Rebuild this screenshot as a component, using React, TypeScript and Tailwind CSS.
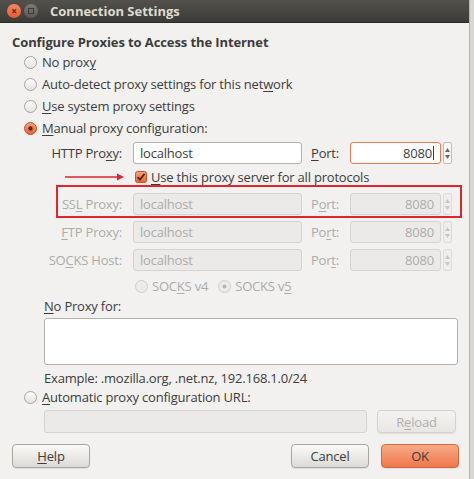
import React from "react";

const font = { fontFamily: '"Open Sans", "DejaVu Sans", sans-serif' };

function Radio({ checked = false, disabled = false }: { checked?: boolean; disabled?: boolean }) {
  return (
    <svg width="13" height="13" viewBox="0 0 13 13" className="shrink-0">
      <defs>
        <linearGradient id="rg" x1="0" y1="0" x2="0" y2="1">
          <stop offset="0" stopColor="#ffffff" />
          <stop offset="1" stopColor="#e4e2de" />
        </linearGradient>
        <linearGradient id="og" x1="0" y1="0" x2="0" y2="1">
          <stop offset="0" stopColor="#f6a07c" />
          <stop offset="1" stopColor="#e7622f" />
        </linearGradient>
      </defs>
      {checked && !disabled ? (
        <>
          <circle cx="6.5" cy="6.5" r="6" fill="url(#og)" stroke="#c9552a" strokeWidth="1" />
          <circle cx="6.5" cy="6.5" r="2.2" fill="#5a2a18" />
        </>
      ) : (
        <>
          <circle
            cx="6.5"
            cy="6.5"
            r="6"
            fill={disabled ? "#ecebe9" : "url(#rg)"}
            stroke={disabled ? "#cfcdc9" : "#a7a49e"}
            strokeWidth="1"
          />
          {checked && <circle cx="6.5" cy="6.5" r="2" fill="#b9b7b3" />}
        </>
      )}
    </svg>
  );
}

function Spinner({ disabled = false }: { disabled?: boolean }) {
  const c = disabled ? "#c9c7c3" : "#6b6964";
  return (
    <div
      className={`ml-[2px] flex h-[22px] w-[9px] flex-col items-center justify-center gap-[3px] rounded-[2px] border ${
        disabled ? "border-[#dedcd8] bg-[#efeeec]" : "border-[#c2bfba] bg-[#f7f6f5]"
      }`}
    >
      <svg width="5" height="4" viewBox="0 0 5 4">
        <path d="M0 4 L2.5 0 L5 4 Z" fill={c} />
      </svg>
      <svg width="5" height="4" viewBox="0 0 5 4">
        <path d="M0 0 L2.5 4 L5 0 Z" fill={c} />
      </svg>
    </div>
  );
}

function U({ children }: { children: React.ReactNode }) {
  return <span className="underline underline-offset-2">{children}</span>;
}

function ProxyRow({
  label,
  port,
  disabled = true,
  focused = false,
  cls = "h-[28px]",
}: {
  label: React.ReactNode;
  port: React.ReactNode;
  disabled?: boolean;
  focused?: boolean;
  cls?: string;
}) {
  const text = disabled ? "text-[#ababa8]" : "text-[#3c3c3c]";
  const box = disabled
    ? "border-[#d6d4d0] bg-[#ebeae8] text-[#adacaa]"
    : "border-[#b4b1ab] bg-white text-[#3c3c3c]";
  return (
    <div className={`flex items-center ${cls}`}>
      <div className={`w-[111px] pr-[1px] text-right ${text}`}>{label}</div>
      <div
        className={`ml-[10px] flex h-[22px] w-[169px] items-center rounded-[3px] border px-[6px] ${box}`}
      >
        localhost
      </div>
      <div className={`ml-[9px] w-[39px] ${text}`}>{port}</div>
      <div
        className={`flex h-[22px] w-[91px] items-center justify-end rounded-[3px] border px-[6px] ${
          focused ? "border-[#ef7a4a] bg-white text-[#3c3c3c]" : box
        }`}
      >
        8080
        {focused && <span className="ml-[1px] h-[14px] w-px bg-[#3c3c3c]" />}
      </div>
      <Spinner disabled={disabled} />
    </div>
  );
}

function Button({
  children,
  primary = false,
  disabled = false,
  cls = "",
}: {
  children: React.ReactNode;
  primary?: boolean;
  disabled?: boolean;
  cls?: string;
}) {
  const look = primary
    ? "border-[#cd6a43] bg-gradient-to-b from-[#f7aa89] to-[#ee7649] text-[#3c3c3c]"
    : disabled
    ? "border-[#d4d2ce] bg-gradient-to-b from-[#f4f3f2] to-[#e8e7e4] text-[#b1afab]"
    : "border-[#a9a6a0] bg-gradient-to-b from-[#fafaf9] to-[#dcdad6] text-[#3c3c3c]";
  return (
    <div
      className={`flex items-center justify-center rounded-[4px] border shadow-[0_1px_1px_rgba(0,0,0,0.08)] ${look} ${cls}`}
    >
      {children}
    </div>
  );
}

export default function App() {
  return (
    <div
      className="relative h-[479px] w-[474px] overflow-hidden bg-[#d9d7d3] text-[13px] leading-[16px] tracking-[-0.2px] text-[#3c3c3c]"
      style={font}
    >
      <div className="flex h-full w-[470px] flex-col border-r border-[#b9b6b1] bg-[#f2f1f0]">
        {/* title bar */}
        <div className="flex h-[22px] shrink-0 items-center bg-gradient-to-b from-[#52514c] to-[#3c3b37] px-[7px] shadow-[0_1px_0_#2b2a27]">
          <div className="flex h-[14px] w-[14px] items-center justify-center rounded-full bg-gradient-to-b from-[#f8875f] to-[#e35a2a] text-[10px] font-bold leading-none text-[#5a2512]">
            ×
          </div>
          <div className="ml-[3px] flex h-[14px] w-[14px] items-center justify-center rounded-full bg-gradient-to-b from-[#7b7a75] to-[#5a5955]">
            <div className="h-[6px] w-[6px] border border-[#3c3b37]" />
          </div>
          <div className="ml-[12px] text-[13px] font-bold tracking-[0px] text-[#dfdbd2]">
            Connection Settings
          </div>
        </div>

        <div className="flex flex-col px-[12px]">
          <div className="mt-[11px] h-[18px] text-[13px] font-bold leading-[18px] tracking-[-0.1px]">
            Configure Proxies to Access the Internet
          </div>

          <div className="ml-[12px] flex flex-col">
            <div className="flex h-[22px] items-center gap-[5px]">
              <Radio />
              <span>
                No prox<U>y</U>
              </span>
            </div>
            <div className="flex h-[22px] items-center gap-[5px]">
              <Radio />
              <span>
                Auto-detect proxy settings for this net<U>w</U>ork
              </span>
            </div>
            <div className="flex h-[22px] items-center gap-[5px]">
              <Radio />
              <span>
                <U>U</U>se system proxy settings
              </span>
            </div>
            <div className="flex h-[22px] items-center gap-[5px]">
              <Radio checked />
              <span>
                <U>M</U>anual proxy configuration:
              </span>
            </div>
          </div>

          {/* manual proxy grid */}
          <div className="relative flex flex-col">
            <ProxyRow
              label={
                <>
                  HTTP Pro<U>x</U>y:
                </>
              }
              port={
                <>
                  <U>P</U>ort:
                </>
              }
              disabled={false}
              focused
              cls="mt-[3px] h-[22px]"
            />
            <div className="flex h-[26px] items-center">
              <svg width="60" height="8" viewBox="0 0 60 8" className="ml-[53px]">
                <line x1="0" y1="4" x2="54" y2="4" stroke="#e0262b" strokeWidth="1.6" />
                <path d="M52 0.5 L59 4 L52 7.5 Z" fill="#e0262b" />
              </svg>
              <svg width="12" height="12" viewBox="0 0 12 12" className="ml-[10px] shrink-0">
                <defs>
                  <linearGradient id="cg" x1="0" y1="0" x2="0" y2="1">
                    <stop offset="0" stopColor="#f6a47f" />
                    <stop offset="1" stopColor="#e5622f" />
                  </linearGradient>
                </defs>
                <rect x="0.5" y="0.5" width="11" height="11" rx="2" fill="url(#cg)" stroke="#c6552b" />
                <path d="M2.6 6.2 L5 8.6 L9.6 2.8" fill="none" stroke="#4a2414" strokeWidth="1.8" />
              </svg>
              <span className="ml-[4px]">
                <U>U</U>se this proxy server for all protocols
              </span>
            </div>
            <ProxyRow
              label={
                <>
                  SS<U>L</U> Proxy:
                </>
              }
              port={
                <>
                  P<U>o</U>rt:
                </>
              }
            />
            <ProxyRow
              label={
                <>
                  <U>F</U>TP Proxy:
                </>
              }
              port={
                <>
                  Po<U>r</U>t:
                </>
              }
            />
            <ProxyRow
              label={
                <>
                  SO<U>C</U>KS Host:
                </>
              }
              port={
                <>
                  Por<U>t</U>:
                </>
              }
            />
            <div className="flex h-[24px] items-center text-[#ababa8]">
              <div className="ml-[123px] flex items-center gap-[4px]">
                <Radio disabled />
                <span>
                  SOC<U>K</U>S v4
                </span>
              </div>
              <div className="ml-[10px] flex items-center gap-[4px]">
                <Radio checked disabled />
                <span>
                  SOCKS v<U>5</U>
                </span>
              </div>
            </div>
            {/* red annotation box */}
            <div className="absolute left-[44px] top-[46px] h-[33px] w-[406px] border-2 border-[#e0262b]" />
          </div>

          <div className="ml-[32px] flex flex-col">
            <div className="h-[16px]">
              <U>N</U>o Proxy for:
            </div>
            <div className="mt-[4px] h-[47px] w-[414px] rounded-[3px] border border-[#b4b1ab] bg-white" />
            <div className="flex h-[25px] items-center">
              Example: .mozilla.org, .net.nz, 192.168.1.0/24
            </div>
          </div>

          <div className="ml-[12px] flex h-[14px] items-center gap-[5px]">
            <Radio />
            <span>
              <U>A</U>utomatic proxy configuration URL:
            </span>
          </div>

          <div className="ml-[32px] mt-[6px] flex h-[23px] items-center">
            <div className="h-[23px] w-[323px] rounded-[3px] border border-[#d6d4d0] bg-[#ebeae8]" />
            <Button disabled cls="ml-[10px] h-[23px] w-[79px]">
              <span>
                R<U>e</U>load
              </span>
            </Button>
          </div>

          <div className="mt-[11px] flex h-[24px] items-center">
            <Button cls="h-[24px] w-[78px]">
              <span>
                <U>H</U>elp
              </span>
            </Button>
            <Button cls="ml-auto h-[24px] w-[78px]">Cancel</Button>
            <Button primary cls="ml-[12px] mr-[-2px] h-[24px] w-[78px]">
              OK
            </Button>
          </div>
        </div>
      </div>
    </div>
  );
}
